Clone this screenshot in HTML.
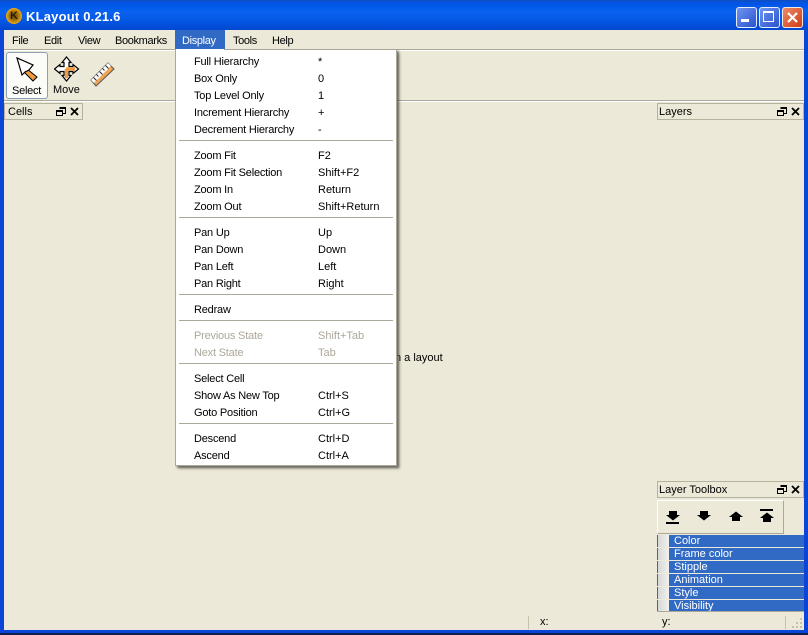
<!DOCTYPE html>
<html><head><meta charset="utf-8"><style>
html,body{margin:0;padding:0;background:#0a2a6a}
#w{position:relative;width:808px;height:635px;overflow:hidden;background:#ece9d8;font:11px/13px "Liberation Sans",sans-serif;color:#000}
#w div,#w span.a{position:absolute;white-space:nowrap}
.t{letter-spacing:-.2px;margin-top:1px}
.k{margin-top:1px}
.m{letter-spacing:-.35px;margin-top:1px}
.d{color:#aca899}
.sep{left:179px;width:214px;height:1px;background:#aca899;border-bottom:1px solid #fff}
.dock{height:17px;border:1px solid #b5b29f;box-sizing:border-box;background:#ece9d8}
.row{left:657px;width:147px;height:12px;background:#316ac5;color:#fff;line-height:13px;overflow:hidden}
.row b{position:absolute;left:1px;top:0;width:11px;height:12px;background:linear-gradient(90deg,#d4d8d8,#f2f2ec)}
.row span{position:absolute;left:17px;top:0;font-weight:normal}
</style></head><body><div id="w">
<div style="left:0;top:0;width:808px;height:30px;background:linear-gradient(180deg,#0a5ae0 0,#0453e6 3px,#0058e8 6px,#0a62f0 12px,#0355e0 22px,#0046d0 30px)"></div>
<div style="left:0;top:0;width:808px;height:2px;background:#0a50c8"></div>
<div style="left:0;top:30px;width:4px;height:605px;background:#0a44d8"></div>
<div style="left:804px;top:30px;width:4px;height:605px;background:#0a44d8"></div>
<div style="left:0;top:630px;width:808px;height:3px;background:#0a44d8"></div>
<div style="left:0;top:633px;width:808px;height:2px;background:#10204a"></div>

<div style="left:6px;top:8px;width:16px;height:16px;border-radius:50%;background:radial-gradient(circle at 50% 50%,#6a4a10 0,#9a7010 35%,#f2a812 70%,#f8b820 100%)"></div>
<div style="left:10px;top:10px;font:bold 11px/13px 'Liberation Sans',sans-serif;color:#2a1c04">K</div>
<div style="left:26px;top:9px;font:bold 13px/16px 'Liberation Sans',sans-serif;color:#fff;letter-spacing:.2px">KLayout 0.21.6</div>

<div style="left:736px;top:7px;width:19px;height:19px;border:1px solid #e8eefc;border-radius:3px;background:linear-gradient(135deg,#6f95ef,#2a52cf)"></div>
<div style="left:741px;top:19px;width:8px;height:3px;background:#fff"></div>
<div style="left:759px;top:7px;width:19px;height:19px;border:1px solid #e8eefc;border-radius:3px;background:linear-gradient(135deg,#6f95ef,#2a52cf)"></div>
<div style="left:763px;top:11px;width:9px;height:8px;border:1px solid #fff;border-top-width:2px"></div>
<div style="left:782px;top:7px;width:19px;height:19px;border:1px solid #f4e8e0;border-radius:3px;background:linear-gradient(135deg,#ec8a68,#d03c14)"></div>
<svg style="position:absolute;left:782px;top:7px" width="21" height="21"><path d="M6 6L15 15M15 6L6 15" stroke="#fff" stroke-width="2.2"/></svg>

<div style="left:4px;top:49px;width:800px;height:1px;background:#aca899"></div>
<div style="left:4px;top:50px;width:800px;height:1px;background:#fff"></div>
<div style="left:4px;top:100px;width:800px;height:1px;background:#aca899"></div>
<div style="left:4px;top:101px;width:800px;height:1px;background:#fff"></div>

<div class="m" style="left:12px;top:34px">File</div>
<div class="m" style="left:44px;top:34px">Edit</div>
<div class="m" style="left:78px;top:34px">View</div>
<div class="m" style="left:115px;top:34px">Bookmarks</div>
<div style="left:175px;top:30px;width:50px;height:19px;background:#316ac5"></div>
<div class="m" style="left:182px;top:34px;color:#fff">Display</div>
<div class="m" style="left:233px;top:34px">Tools</div>
<div class="m" style="left:272px;top:34px">Help</div>

<div style="left:6px;top:52px;width:40px;height:45px;border:1px solid #8aa0b8;border-radius:3px;background:#fbfbf8"></div>
<svg style="position:absolute;left:10px;top:54px" width="32" height="30"><path d="M17 15L27 23L23 27L14 18Z" fill="#f09a40" stroke="#000"/><path d="M7 4L12 21L15 18L19 16L23 11Z" fill="#fff" stroke="#000" stroke-width="1.2"/></svg>
<div class="m" style="left:12px;top:84px;letter-spacing:-.25px">Select</div>
<svg style="position:absolute;left:54px;top:56px" width="26" height="26"><path d="M12.500 1L17 6.500H15V10.500H19V8.500L24.500 13L19 17.500V15.500H15V19.500H17L12.500 25L8 19.500H10V15.500H6V17.500L.5 13L6 8.500V10.500H10V6.500H8Z" fill="#fff" stroke="#000" stroke-width="1.200"/><path d="M12 13H21M12.500 13V22" stroke="#f09a40" stroke-width="3.400"/></svg>
<div class="m" style="left:53px;top:83px;letter-spacing:0">Move</div>
<svg style="position:absolute;left:88px;top:60px" width="28" height="28"><path d="M3 20L20 3L26 9L8 26Z" fill="#f2a455" stroke="#555"/><path d="M3 20L20 3L23 6L6 23Z" fill="#fff"/><path d="M5.500 17.500L8.500 20.500M8.500 14.500L10.500 16.500M11.500 11.500L14.500 14.500M14.500 8.500L16.500 10.500M17.500 5.500L20.500 8.500" stroke="#222"/></svg>

<div class="dock" style="left:4px;top:103px;width:79px;height:17px"></div>
<div class="k" style="left:8px;top:105px">Cells</div>
<svg style="position:absolute;left:56px;top:107px" width="24" height="10"><path d="M3.500 .5H9.500V6.500H7M.5 3.500H6.500V8.500H.5Z M.5 4.500H6.500M3.500 1.500H9.500" fill="none" stroke="#000"/><path d="M15 1L22 8M22 1L15 8" stroke="#000" stroke-width="1.800"/></svg>

<div class="dock" style="left:657px;top:103px;width:147px;height:17px"></div>
<div class="k" style="left:659px;top:105px">Layers</div>
<svg style="position:absolute;left:777px;top:107px" width="24" height="10"><path d="M3.500 .5H9.500V6.500H7M.5 3.500H6.500V8.500H.5Z M.5 4.500H6.500M3.500 1.500H9.500" fill="none" stroke="#000"/><path d="M15 1L22 8M22 1L15 8" stroke="#000" stroke-width="1.800"/></svg>

<div class="k" style="left:395px;top:351px">n a layout</div>

<div style="left:179px;top:54px;width:221px;height:415px;background:rgba(60,60,50,.22);filter:blur(1.2px)"></div>
<div style="left:175px;top:49px;width:222px;height:417px;box-sizing:border-box;background:#fff;border:1px solid #aca899;border-top:1px solid #aca899;box-shadow:2px 2px 2px rgba(70,70,60,.7)"></div>
<div style="left:176px;top:49px;width:48px;height:1px;background:#fff"></div>

<div class="t" style="left:194px;top:55px">Full Hierarchy</div><div class="k" style="left:318px;top:55px">*</div>
<div class="t" style="left:194px;top:72px">Box Only</div><div class="k" style="left:318px;top:72px">0</div>
<div class="t" style="left:194px;top:89px">Top Level Only</div><div class="k" style="left:318px;top:89px">1</div>
<div class="t" style="left:194px;top:106px">Increment Hierarchy</div><div class="k" style="left:318px;top:106px">+</div>
<div class="t" style="left:194px;top:123px">Decrement Hierarchy</div><div class="k" style="left:318px;top:123px">-</div>
<div class="sep" style="top:140px"></div>
<div class="t" style="left:194px;top:149px">Zoom Fit</div><div class="k" style="left:318px;top:149px">F2</div>
<div class="t" style="left:194px;top:166px">Zoom Fit Selection</div><div class="k" style="left:318px;top:166px">Shift+F2</div>
<div class="t" style="left:194px;top:183px">Zoom In</div><div class="k" style="left:318px;top:183px">Return</div>
<div class="t" style="left:194px;top:200px">Zoom Out</div><div class="k" style="left:318px;top:200px">Shift+Return</div>
<div class="sep" style="top:217px"></div>
<div class="t" style="left:194px;top:226px">Pan Up</div><div class="k" style="left:318px;top:226px">Up</div>
<div class="t" style="left:194px;top:243px">Pan Down</div><div class="k" style="left:318px;top:243px">Down</div>
<div class="t" style="left:194px;top:260px">Pan Left</div><div class="k" style="left:318px;top:260px">Left</div>
<div class="t" style="left:194px;top:277px">Pan Right</div><div class="k" style="left:318px;top:277px">Right</div>
<div class="sep" style="top:294px"></div>
<div class="t" style="left:194px;top:303px">Redraw</div>
<div class="sep" style="top:320px"></div>
<div class="t d" style="left:194px;top:329px">Previous State</div><div class="d k" style="left:318px;top:329px">Shift+Tab</div>
<div class="t d" style="left:194px;top:346px">Next State</div><div class="d k" style="left:318px;top:346px">Tab</div>
<div class="sep" style="top:363px"></div>
<div class="t" style="left:194px;top:372px">Select Cell</div>
<div class="t" style="left:194px;top:389px">Show As New Top</div><div class="k" style="left:318px;top:389px">Ctrl+S</div>
<div class="t" style="left:194px;top:406px">Goto Position</div><div class="k" style="left:318px;top:406px">Ctrl+G</div>
<div class="sep" style="top:423px"></div>
<div class="t" style="left:194px;top:432px">Descend</div><div class="k" style="left:318px;top:432px">Ctrl+D</div>
<div class="t" style="left:194px;top:449px">Ascend</div><div class="k" style="left:318px;top:449px">Ctrl+A</div>

<div class="dock" style="left:657px;top:481px;width:147px;height:17px"></div>
<div class="k" style="left:659px;top:483px">Layer Toolbox</div>
<svg style="position:absolute;left:777px;top:485px" width="24" height="10"><path d="M3.500 .5H9.500V6.500H7M.5 3.500H6.500V8.500H.5Z M.5 4.500H6.500M3.500 1.500H9.500" fill="none" stroke="#000"/><path d="M15 1L22 8M22 1L15 8" stroke="#000" stroke-width="1.800"/></svg>
<div style="left:657px;top:500px;width:127px;height:34px;box-sizing:border-box;border-right:1px solid #aca899;border-bottom:1px solid #aca899;border-left:1px solid #fff;border-top:1px solid #fff"></div>
<svg style="position:absolute;left:660px;top:505px" width="120" height="24">
<path d="M9 6H17V10H20L13 15.500L6 10H9Z" fill="#000"/><rect x="6" y="17" width="13" height="2" fill="#000"/>
<path d="M40 6H48V10H51L44 15.500L37 10H40Z" fill="#000"/>
<path d="M72 16H80V12H83L76 6.500L69 12H72Z" fill="#000"/>
<path d="M103 17H111V13H114L107 7.500L100 13H103Z" fill="#000"/><rect x="100" y="4" width="13" height="2" fill="#000"/>
</svg>
<div class="row" style="top:535px"><b></b><span style="top:0">Color</span></div>
<div class="row" style="top:548px"><b></b><span style="top:0">Frame color</span></div>
<div class="row" style="top:561px"><b></b><span style="top:0">Stipple</span></div>
<div class="row" style="top:574px"><b></b><span style="top:0">Animation</span></div>
<div class="row" style="top:587px"><b></b><span style="top:0">Style</span></div>
<div class="row" style="top:600px"><b></b><span style="top:0">Visibility</span></div>
<div style="left:657px;top:611px;width:147px;height:1px;background:#aca899"></div>

<div style="left:528px;top:616px;width:1px;height:13px;background:#c4c1ae"></div>
<div style="left:785px;top:616px;width:1px;height:13px;background:#c4c1ae"></div>
<div class="k" style="left:540px;top:615px">x:</div>
<div class="k" style="left:662px;top:615px">y:</div>
<svg style="position:absolute;left:792px;top:617px" width="12" height="12"><path d="M8 1h2v2H8zM4 5h2v2H4zM8 5h2v2H8zM0 9h2v2H0zM4 9h2v2H4zM8 9h2v2H8z" fill="#c4c1ae"/></svg>
</div></body></html>
